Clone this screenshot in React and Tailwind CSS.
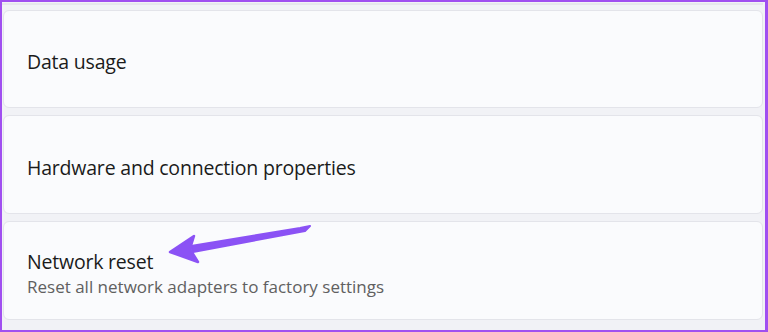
export default function App() {
  const font = { fontFamily: '"Open Sans", "Noto Sans", sans-serif' };
  return (
    <div className="w-[768px] h-[332px] overflow-hidden bg-[#f1f2f6] border-t-2 border-l-2 border-r-[3px] border-b-2 border-[#a04ff0] relative" style={font}>
      <div className="h-[2px] bg-[#e6e7ec] mt-[1px] mr-[2px]" />
      <div className="flex flex-col gap-[7px] pt-[5px] pl-[1px] pr-[2px]">
        <div className="h-[98px] rounded-[6px] bg-[#fafbfd] border border-[#e3e4ea] flex items-center pl-[23px] pt-[6px]">
          <span className="text-[19.5px] text-[#1b1b1b] tracking-[-0.2px]">Data usage</span>
        </div>
        <div className="h-[99px] rounded-[6px] bg-[#fafbfd] border border-[#e3e4ea] flex items-center pl-[23px] pt-[6px]">
          <span className="text-[19.5px] text-[#1b1b1b] tracking-[-0.2px]">Hardware and connection properties</span>
        </div>
        <div className="h-[99px] rounded-[6px] bg-[#fafbfd] border border-[#e3e4ea] flex flex-col justify-center pl-[23px] pt-[7px]">
          <span className="text-[19.5px] leading-[26px] text-[#1b1b1b] tracking-[-0.2px]">Network reset</span>
          <span className="text-[17px] leading-[24px] text-[#606060] tracking-[0px]">Reset all network adapters to factory settings</span>
        </div>
      </div>
      <svg className="absolute" width="768" height="332" viewBox="0 0 768 332" style={{ left: -2, top: -2 }}>
        <path d="M310 226 L300 228 L191 246 L193 252 L305 231 Z" fill="#8b52f5" stroke="#8b52f5" strokeWidth="2" strokeLinejoin="round" />
        <path d="M170 252 L194 236 L190 249 L198 262 Z" fill="#8b52f5" stroke="#8b52f5" strokeWidth="2.5" strokeLinejoin="round" />
      </svg>
    </div>
  );
}
